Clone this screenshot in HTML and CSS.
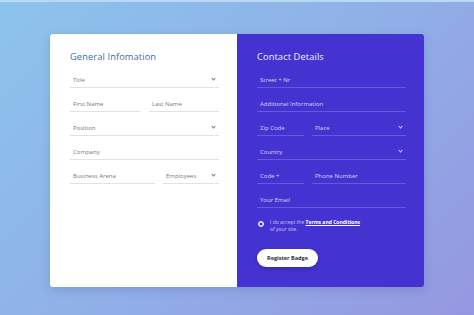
FILE: index.html
```html
<!DOCTYPE html>
<html>
<head>
<meta charset="utf-8">
<link rel="stylesheet" href="styles.css">
</head>
<body>
<div class="topstrip"></div>
<div class="card">
  <section class="panel general">
    <h2 class="title">General Infomation</h2>
    <div class="fields">
      <div class="field select"><span>Title</span><i class="chev"></i></div>
      <div class="row split-even">
        <div class="field"><span>First Name</span></div>
        <div class="field"><span>Last Name</span></div>
      </div>
      <div class="field select"><span>Position</span><i class="chev"></i></div>
      <div class="field"><span>Company</span></div>
      <div class="row split-biz">
        <div class="field"><span>Business Arena</span></div>
        <div class="field select"><span>Employees</span><i class="chev"></i></div>
      </div>
    </div>
  </section>
  <section class="panel contact">
    <h2 class="title">Contact Details</h2>
    <div class="fields">
      <div class="field"><span>Street + Nr</span></div>
      <div class="field"><span>Additional Information</span></div>
      <div class="row split-zip">
        <div class="field"><span>Zip Code</span></div>
        <div class="field select"><span>Place</span><i class="chev"></i></div>
      </div>
      <div class="field select"><span>Country</span><i class="chev"></i></div>
      <div class="row split-zip">
        <div class="field"><span>Code +</span></div>
        <div class="field"><span>Phone Number</span></div>
      </div>
      <div class="field"><span>Your Email</span></div>
    </div>
    <div class="accept">
      <span class="radio"></span>
      <p>I do accept the <a class="terms">Terms and Conditions</a><br>of your site.</p>
    </div>
    <button class="btn">Register Badge</button>
  </section>
</div>
</body>
</html>
```
FILE: styles.css
```css
html, body {
  margin: 0;
  padding: 0;
}
body {
  width: 474px;
  height: 315px;
  overflow: hidden;
  background: linear-gradient(135deg, #8cc4ec 0%, #90b0e8 50%, #9597e0 100%);
  font-family: "Open Sans", "DejaVu Sans", sans-serif;
}
.topstrip {
  height: 2px;
  background: #b9d8f2;
}
.card {
  margin: 32px 0 0 50px;
  width: 374px;
  height: 253px;
  display: grid;
  grid-template-columns: 187px 187px;
  border-radius: 3px;
  box-shadow: 0 3px 10px rgba(40, 50, 120, 0.18);
}
.panel {
  padding: 16px 18px 0 20px;
  box-sizing: border-box;
}
.general {
  background: #ffffff;
  border-radius: 3px 0 0 3px;
}
.contact {
  background: #4433d1;
  border-radius: 0 3px 3px 0;
}
.title {
  margin: 0;
  height: 14px;
  line-height: 14px;
  font-size: 9.3px;
  font-weight: 400;
  letter-spacing: 0.1px;
}
.general .title { color: #3e6e9f; }
.contact .title { color: #f2f0ff; }
.fields {
  margin-top: 8px;
  display: flex;
  flex-direction: column;
  gap: 8px;
}
.row {
  display: grid;
  column-gap: 8px;
}
.split-even { grid-template-columns: 70px 1fr; column-gap: 9px; }
.split-biz { grid-template-columns: 85px 1fr; }
.split-zip { grid-template-columns: 47px 1fr; }
.field {
  height: 15px;
  display: flex;
  align-items: center;
  justify-content: space-between;
  padding: 0 3px;
  font-size: 6px;
  border-bottom: 1px solid #e2e2e2;
}
.general .field { color: #7a7a7a; }
.contact .field { color: #d9d4f7; border-bottom-color: #6759dc; }
.chev {
  width: 2px;
  height: 2px;
  border-right: 1px solid currentColor;
  border-bottom: 1px solid currentColor;
  transform: rotate(45deg);
  margin: -2px 1px 0 0;
}
.accept {
  margin-top: 11px;
  display: flex;
  align-items: flex-start;
  gap: 6px;
  padding-left: 1px;
}
.radio {
  width: 4px;
  height: 4px;
  border-radius: 50%;
  background: #4433d1;
  border: 1.5px solid #ffffff;
  box-shadow: 0 0 0 0.5px #ffffff inset;
  margin-top: 2px;
}
.accept p {
  margin: 0;
  font-size: 5px;
  line-height: 7px;
  color: #cdc7f3;
}
.terms {
  color: #ffffff;
  font-weight: 700;
  text-decoration: underline;
}
.btn {
  margin-top: 16px;
  width: 61px;
  height: 18px;
  border: none;
  border-radius: 9px;
  background: #ffffff;
  color: #2a2a3a;
  font-family: "Open Sans", "DejaVu Sans", sans-serif;
  font-size: 5.5px;
  font-weight: 700;
  padding: 0;
  box-shadow: 0 2px 4px rgba(20, 10, 80, 0.25);
}
```
